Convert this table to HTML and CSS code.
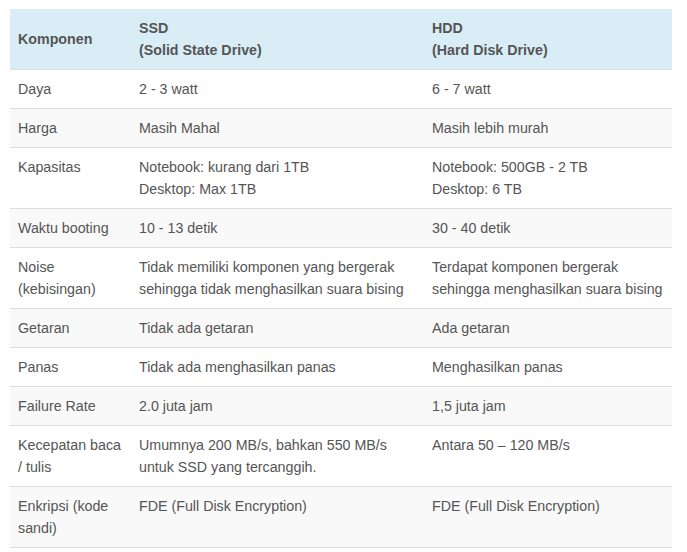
FILE: index.html
```html
<!DOCTYPE html>
<html>
<head>
<meta charset="utf-8">
<link rel="stylesheet" href="styles.css">
</head>
<body>
<table class="cmp">
  <colgroup>
    <col class="c1"><col class="c2"><col class="c3">
  </colgroup>
  <thead>
    <tr><th>Komponen</th><th>SSD<br>(Solid State Drive)</th><th>HDD<br>(Hard Disk Drive)</th></tr>
  </thead>
  <tbody>
    <tr><td>Daya</td><td>2 - 3 watt</td><td>6 - 7 watt</td></tr>
    <tr><td>Harga</td><td>Masih Mahal</td><td>Masih lebih murah</td></tr>
    <tr><td>Kapasitas</td><td>Notebook: kurang dari 1TB<br>Desktop: Max 1TB</td><td>Notebook: 500GB - 2 TB<br>Desktop: 6 TB</td></tr>
    <tr><td>Waktu booting</td><td>10 - 13 detik</td><td>30 - 40 detik</td></tr>
    <tr><td>Noise (kebisingan)</td><td>Tidak memiliki komponen yang bergerak sehingga tidak menghasilkan suara bising</td><td>Terdapat komponen bergerak sehingga menghasilkan suara bising</td></tr>
    <tr><td>Getaran</td><td>Tidak ada getaran</td><td>Ada getaran</td></tr>
    <tr><td>Panas</td><td>Tidak ada menghasilkan panas</td><td>Menghasilkan panas</td></tr>
    <tr><td>Failure Rate</td><td>2.0 juta jam</td><td>1,5 juta jam</td></tr>
    <tr><td>Kecepatan baca / tulis</td><td>Umumnya 200 MB/s, bahkan 550 MB/s untuk SSD yang tercanggih.</td><td>Antara 50 – 120 MB/s</td></tr>
    <tr><td>Enkripsi (kode sandi)</td><td>FDE (Full Disk Encryption)</td><td>FDE (Full Disk Encryption)</td></tr>
  </tbody>
</table>
</body>
</html>
```
FILE: styles.css
```css
html, body { margin: 0; padding: 0; background: #fff; }
body { padding: 9px 15px 0 10px; font-family: "Liberation Sans", Arial, sans-serif; font-size: 14.25px; line-height: 22px; color: #555; }
.cmp { border-collapse: collapse; width: 662px; table-layout: fixed; }
.c1 { width: 121px; }
.c2 { width: 293px; }
.c3 { width: 248px; }
.cmp th, .cmp td { padding: 8px; text-align: left; vertical-align: top; border-bottom: 1px solid #ddd; line-height: 22px; }
.cmp th { background: #d9edf7; font-weight: bold; vertical-align: middle; }
.cmp tbody tr:nth-child(even) td { background: #f9f9f9; }
```
